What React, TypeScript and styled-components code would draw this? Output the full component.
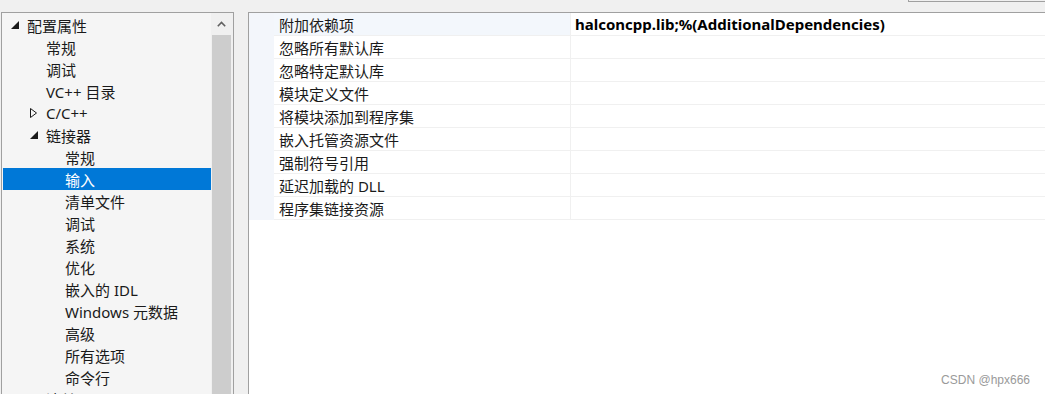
import React from 'react';
import styled, { createGlobalStyle } from 'styled-components';

const GlobalStyle = createGlobalStyle`
  html, body {
    margin: 0;
    padding: 0;
    background: #f0f0f0;
    overflow: hidden;
  }
  body {
    font-family: "Noto Sans", "Noto Sans CJK SC", sans-serif;
    color: #1a1a1a;
  }
`;

const Page = styled.div`
  position: relative;
  width: 1045px;
  height: 394px;
  overflow: hidden;
`;

const TopStrip = styled.div`
  height: 12px;
  display: flex;
  justify-content: flex-end;
`;

const TopBox = styled.div`
  width: 136px;
  height: 1px;
  border-left: 1px solid #a0a0a0;
  border-bottom: 1px solid #a0a0a0;
  background: #f0f0f0;
`;

const Body = styled.div`
  display: flex;
  padding-left: 1px;
  gap: 14px;
`;

const TreePanel = styled.div`
  width: 233px;
  height: 400px;
  box-sizing: border-box;
  border: 1px solid #a0a0a0;
  background: #f5f5f5;
  display: flex;
`;

const TreeList = styled.ul`
  list-style: none;
  margin: 0;
  padding: 1px 0 0 1px;
  width: 208px;
`;

const TreeItem = styled.li<{ $level: number; $selected?: boolean }>`
  height: 22px;
  display: flex;
  align-items: center;
  padding-left: ${(p) => 8 + p.$level * 19}px;
  font-size: 15px;
  white-space: nowrap;
  background: ${(p) => (p.$selected ? '#0078d7' : 'transparent')};
  color: ${(p) => (p.$selected ? '#ffffff' : '#1a1a1a')};
`;

const Toggle = styled.span`
  width: 16px;
  height: 22px;
  display: flex;
  align-items: center;
  justify-content: flex-start;
  flex-shrink: 0;
`;

const Scrollbar = styled.div`
  width: 22px;
  box-sizing: border-box;
  padding: 0 2px 0 1px;
  background: #f0f0f0;
  display: flex;
  flex-direction: column;
`;

const ScrollButton = styled.div`
  height: 22px;
  display: flex;
  align-items: center;
  justify-content: center;
`;

const ScrollThumb = styled.div`
  flex: 1;
  background: #cdcdcd;
`;

const GridPanel = styled.div`
  flex: 1;
  height: 400px;
  border-left: 1px solid #a0a0a0;
  border-top: 1px solid #a0a0a0;
  background: #ffffff;
`;

const GridRows = styled.div`
  display: flex;
  flex-direction: column;
  background: #f3f6fb;
  padding-left: 25px;
`;

const GridRow = styled.div<{ $selected?: boolean }>`
  height: 23px;
  box-sizing: border-box;
  display: flex;
  border-bottom: 1px solid #f0f0f0;
  background: ${(p) => (p.$selected ? '#f3f7fc' : '#ffffff')};
`;

const NameCell = styled.div`
  width: 297px;
  box-sizing: border-box;
  padding-left: 5px;
  display: flex;
  align-items: center;
  font-size: 15px;
  border-right: 1px solid #f0f0f0;
  white-space: nowrap;
`;

const ValueCell = styled.div`
  flex: 1;
  padding-left: 4px;
  display: flex;
  align-items: center;
  font-size: 15px;
  font-weight: 700;
  background: #ffffff;
  white-space: nowrap;
  color: #000;
`;

const Watermark = styled.div`
  position: absolute;
  right: 15px;
  bottom: 7px;
  font-family: "Liberation Sans", Arial, sans-serif;
  font-size: 12px;
  color: #9a9a9a;
`;

const Expanded = () => (
  <svg width="8" height="8" viewBox="0 0 8 8">
    <polygon points="8,0 8,8 0,8" fill="#1a1a1a" />
  </svg>
);

const Collapsed = () => (
  <svg width="7" height="10" viewBox="0 0 7 10">
    <polygon points="0.5,0.5 6.5,5 0.5,9.5" fill="none" stroke="#1a1a1a" strokeWidth="1" />
  </svg>
);

type Node = { label: string; level: number; toggle?: 'open' | 'closed'; selected?: boolean };

const tree: Node[] = [
  { label: '配置属性', level: 0, toggle: 'open' },
  { label: '常规', level: 1 },
  { label: '调试', level: 1 },
  { label: 'VC++ 目录', level: 1 },
  { label: 'C/C++', level: 1, toggle: 'closed' },
  { label: '链接器', level: 1, toggle: 'open' },
  { label: '常规', level: 2 },
  { label: '输入', level: 2, selected: true },
  { label: '清单文件', level: 2 },
  { label: '调试', level: 2 },
  { label: '系统', level: 2 },
  { label: '优化', level: 2 },
  { label: '嵌入的 IDL', level: 2 },
  { label: 'Windows 元数据', level: 2 },
  { label: '高级', level: 2 },
  { label: '所有选项', level: 2 },
  { label: '命令行', level: 2 },
  { label: '清单工具', level: 1, toggle: 'closed' },
];

const props: { name: string; value?: string }[] = [
  { name: '附加依赖项', value: 'halconcpp.lib;%(AdditionalDependencies)' },
  { name: '忽略所有默认库' },
  { name: '忽略特定默认库' },
  { name: '模块定义文件' },
  { name: '将模块添加到程序集' },
  { name: '嵌入托管资源文件' },
  { name: '强制符号引用' },
  { name: '延迟加载的 DLL' },
  { name: '程序集链接资源' },
];

const App = () => {
  return (
    <Page>
      <GlobalStyle />
      <TopStrip>
        <TopBox />
      </TopStrip>
      <Body>
        <TreePanel>
          <TreeList>
            {tree.map((node, index) => (
              <TreeItem key={index} $level={node.level} $selected={node.selected}>
                <Toggle>
                  {node.toggle === 'open' && <Expanded />}
                  {node.toggle === 'closed' && <Collapsed />}
                </Toggle>
                {node.label}
              </TreeItem>
            ))}
          </TreeList>
          <Scrollbar>
            <ScrollButton>
              <svg width="9" height="6" viewBox="0 0 9 6">
                <polyline points="0.8,5.2 4.5,1.5 8.2,5.2" fill="none" stroke="#606060" strokeWidth="1.6" />
              </svg>
            </ScrollButton>
            <ScrollThumb />
          </Scrollbar>
        </TreePanel>
        <GridPanel>
          <GridRows>
            {props.map((row, index) => (
              <GridRow key={index} $selected={index === 0}>
                <NameCell>{row.name}</NameCell>
                <ValueCell>{row.value}</ValueCell>
              </GridRow>
            ))}
          </GridRows>
        </GridPanel>
      </Body>
      <Watermark>CSDN @hpx666</Watermark>
    </Page>
  );
};

export default App;
